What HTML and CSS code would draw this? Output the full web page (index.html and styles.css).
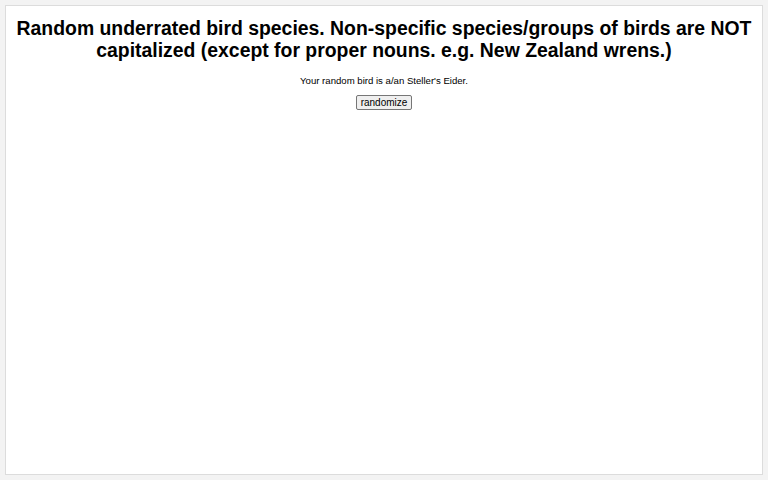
FILE: index.html
```html
<!DOCTYPE html>
<html>
<head>
<meta charset="utf-8">
<link rel="stylesheet" href="styles.css">
</head>
<body>
<div class="page">
  <h1 class="title">Random underrated bird species. Non-specific species/groups of birds are NOT capitalized (except for proper nouns. e.g. New Zealand wrens.)</h1>
  <p class="result">Your random bird is a/an Steller's Eider.</p>
  <div class="actions"><button class="btn">randomize</button></div>
</div>
</body>
</html>
```
FILE: styles.css
```css
html, body { margin: 0; padding: 0; }
body {
  background: #f3f3f3;
  padding: 5px;
  font-family: "Liberation Sans", Arial, sans-serif;
  color: #000;
}
.page {
  background: #fff;
  border: 1px solid #dcdcdc;
  box-sizing: border-box;
  height: 470px;
  text-align: center;
  padding: 10px 4px;
}
.title {
  font-size: 19.4px;
  font-weight: bold;
  line-height: 22px;
  margin: 1px 0 0;
}
.result {
  font-size: 9.6px;
  margin: 14px 0 0;
}
.actions { margin-top: 6px; }
.btn {
  font-family: "Liberation Sans", Arial, sans-serif;
  font-size: 10px;
  padding: 1px 4px;
  background: #efefef;
  border: 1px solid #767676;
  border-radius: 2px;
}
```
